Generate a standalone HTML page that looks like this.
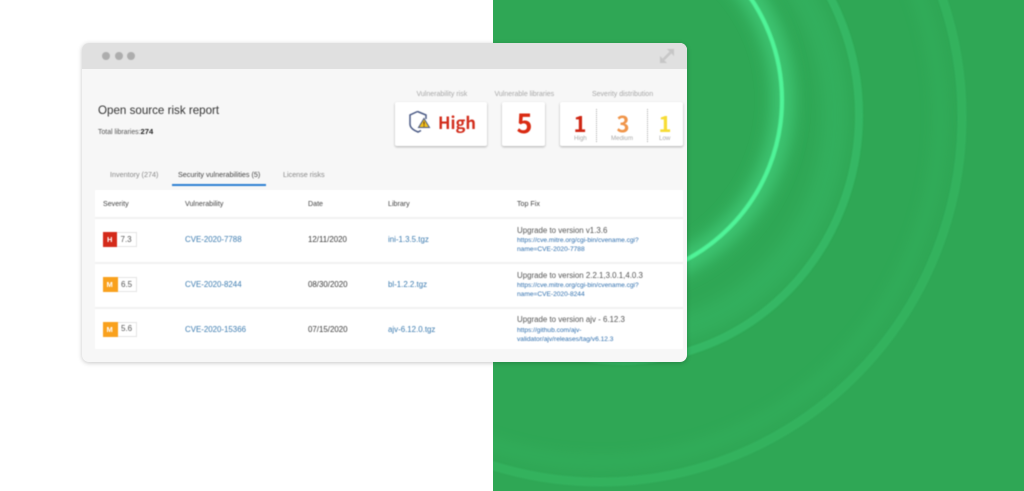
<!DOCTYPE html>
<html><head><meta charset="utf-8"><style>
html,body{margin:0;padding:0;background:#fff}
#p{position:relative;width:1024px;height:491px;overflow:hidden;background:#fff;font-family:"Liberation Sans",sans-serif}
#g{position:absolute;left:493px;top:0;width:531px;height:491px;background:#2fa755;overflow:hidden}
#card{position:absolute;left:82px;top:43px;width:605px;height:319px;background:#f7f7f7;border-radius:7px;box-shadow:0 1px 5px rgba(0,0,0,.22)}
#hd{position:absolute;left:82px;top:43px;width:605px;height:26px;background:#e0e0e0;border-radius:7px 7px 0 0}
.abs{position:absolute}
.t{position:absolute;white-space:nowrap;line-height:1}
.box{position:absolute;background:#fff;border-radius:2px;box-shadow:0 1px 2px rgba(0,0,0,.3)}
.dot{position:absolute;top:52px;width:8px;height:8px;border-radius:50%;background:#adadad}
.lab{color:#a8a8a8;font-size:7px}
.link{color:#3d7cb0;font-size:7.9px}
.date{color:#3a3a3a;font-size:7.9px}
.sm{color:#2f6fae;font-size:6.6px}
.fix{color:#555;font-size:7.9px}
.th{color:#444;font-size:7.1px}
.big{font-family:"Noto Sans CJK SC","Liberation Sans",sans-serif;font-weight:700}
.sep{position:absolute;left:95px;width:588px;height:2px;background:#f1f1f1}
#ui{position:absolute;left:0;top:0;width:1024px;height:491px;filter:blur(.45px)}
</style></head><body><div id="p">
<div id="g"><svg width="531" height="491" viewBox="493 0 531 491" style="position:absolute;left:0;top:0">
<defs><filter id="b1" x="-30%" y="-30%" width="160%" height="160%"><feGaussianBlur stdDeviation="8"/></filter><filter id="b2" x="-10%" y="-10%" width="120%" height="120%"><feGaussianBlur stdDeviation=".8"/></filter><filter id="b3" x="-30%" y="-30%" width="160%" height="160%"><feGaussianBlur stdDeviation="6"/></filter></defs>
<ellipse cx="623" cy="115" rx="212" ry="222" fill="none" stroke="#3ac06e" stroke-width="26" opacity=".35" filter="url(#b1)"/>
<circle cx="601" cy="100" r="182" fill="none" stroke="#48dc88" stroke-width="22" opacity=".6" filter="url(#b1)"/>
<circle cx="601" cy="100" r="181" fill="none" stroke="#50f498" stroke-width="4.2" filter="url(#b2)"/>
<ellipse cx="623" cy="115" rx="236" ry="246" fill="none" stroke="#37bd69" stroke-width="8" opacity=".75" filter="url(#b2)"/>
<ellipse cx="600" cy="117" rx="340" ry="345" fill="none" stroke="#35b662" stroke-width="14" opacity=".35" filter="url(#b3)"/>
<ellipse cx="600" cy="117" rx="362" ry="365" fill="none" stroke="#36b561" stroke-width="9" opacity=".8" filter="url(#b2)"/>
</svg></div>
<div id="card"></div>
<div id="hd"></div>
<div id="ui">
<div class="dot" style="left:102px"></div><div class="dot" style="left:115px"></div><div class="dot" style="left:127px"></div>
<svg class="abs" style="left:659px;top:48px" width="16" height="16" viewBox="0 0 16 16"><path d="M4.5 11.5 L11.5 4.5" fill="none" stroke="#c6c6c6" stroke-width="2.6"/><path d="M8 1 H15 V8 Z M1 8 V15 H8 Z" fill="#c6c6c6"/></svg>

<div class="t" style="left:98px;top:105px;font-size:11.6px;color:#333">Open source risk report</div>
<div class="t" style="left:98px;top:127.5px;font-size:6.9px;color:#555">Total libraries:<b style="font-size:7.6px;color:#222">274</b></div>

<div class="t lab" style="left:416.5px;top:90.5px">Vulnerability risk</div>
<div class="t lab" style="left:494.5px;top:90.5px">Vulnerable libraries</div>
<div class="t lab" style="left:592px;top:90.5px">Severity distribution</div>

<div class="box" style="left:395px;top:102px;width:92px;height:44px"></div>
<svg class="abs" style="left:408px;top:110px" width="24" height="24" viewBox="0 0 24 24"><path d="M9.5 1.5 L18 5 V9 M9.5 1.5 L2 5 V14 C2 18 6 20.5 10 22 L13 20.5" fill="none" stroke="#4a5a85" stroke-width="1.5"/><path d="M16 8.5 L21.5 17.5 H10.5 Z" fill="#f2c21c" stroke="#4a5a85" stroke-width="1"/><rect x="15.4" y="11.5" width="1.2" height="3.3" fill="#7a4a10"/><rect x="15.4" y="15.4" width="1.2" height="1.2" fill="#7a4a10"/></svg>
<div class="t big" style="left:438px;top:114px;font-size:16.5px;color:#d22d1c">High</div>

<div class="box" style="left:502px;top:102px;width:43px;height:44px"></div>
<div class="t big" style="left:516.5px;top:108px;font-size:27px;color:#d92a12">5</div>

<div class="box" style="left:560px;top:102px;width:123px;height:44px"></div>
<div class="abs" style="left:596px;top:109px;height:33px;border-left:1px dotted #aaa"></div>
<div class="abs" style="left:647px;top:109px;height:33px;border-left:1px dotted #aaa"></div>
<div class="t big" style="left:573.5px;top:111.5px;font-size:22px;color:#cf2613">1</div>
<div class="t big" style="left:616.5px;top:111.5px;font-size:22px;color:#f0954a">3</div>
<div class="t big" style="left:658.5px;top:111.5px;font-size:22px;color:#f7dc35">1</div>
<div class="t" style="left:574px;top:135.5px;font-size:6.2px;color:#aaa">High</div>
<div class="t" style="left:611px;top:135.5px;font-size:6.2px;color:#aaa">Medium</div>
<div class="t" style="left:659px;top:135.5px;font-size:6.2px;color:#aaa">Low</div>

<div class="t" style="left:110px;top:170.5px;font-size:7.2px;color:#888">Inventory (274)</div>
<div class="t" style="left:178px;top:170.5px;font-size:7.2px;color:#444">Security vulnerabilities (5)</div>
<div class="t" style="left:283px;top:170.5px;font-size:7.2px;color:#888">License risks</div>
<div class="abs" style="left:172px;top:184px;width:94px;height:2px;background:#2b7fd3"></div>

<div class="abs" style="left:95px;top:190px;width:588px;height:159px;background:#fff"></div>
<div class="sep" style="top:217px"></div><div class="sep" style="top:262px"></div><div class="sep" style="top:307px"></div>

<div class="t th" style="left:103px;top:200.5px">Severity</div>
<div class="t th" style="left:185px;top:200.5px">Vulnerability</div>
<div class="t th" style="left:308px;top:200.5px">Date</div>
<div class="t th" style="left:388px;top:200.5px">Library</div>
<div class="t th" style="left:517px;top:200.5px">Top Fix</div>

<div class="abs" style="left:103px;top:232px;width:34px;height:15px;box-sizing:border-box;border:1px solid #e4e4e4;background:#fff"></div>
<div class="abs" style="left:103px;top:232px;width:14px;height:15px;background:#d42a1a"></div>
<div class="t" style="left:107px;top:236px;font-size:7.5px;color:#fff;font-weight:700">H</div>
<div class="t" style="left:120.5px;top:235.5px;font-size:8px;color:#555">7.3</div>

<div class="abs" style="left:103px;top:277px;width:34px;height:15px;box-sizing:border-box;border:1px solid #e4e4e4;background:#fff"></div>
<div class="abs" style="left:103px;top:277px;width:15px;height:15px;background:#f9a11d"></div>
<div class="t" style="left:106.5px;top:281px;font-size:7.5px;color:#fff;font-weight:700">M</div>
<div class="t" style="left:121px;top:280.5px;font-size:8px;color:#555">6.5</div>

<div class="abs" style="left:103px;top:322px;width:34px;height:15px;box-sizing:border-box;border:1px solid #e4e4e4;background:#fff"></div>
<div class="abs" style="left:103px;top:322px;width:15px;height:15px;background:#f9a11d"></div>
<div class="t" style="left:106.5px;top:326px;font-size:7.5px;color:#fff;font-weight:700">M</div>
<div class="t" style="left:121px;top:325px;font-size:8px;color:#555">5.6</div>

<div class="t link" style="left:185px;top:236px">CVE-2020-7788</div>
<div class="t link" style="left:185px;top:280.5px">CVE-2020-8244</div>
<div class="t link" style="left:185px;top:325.5px">CVE-2020-15366</div>

<div class="t date" style="left:308px;top:236px">12/11/2020</div>
<div class="t date" style="left:308px;top:280.5px">08/30/2020</div>
<div class="t date" style="left:308px;top:325.5px">07/15/2020</div>

<div class="t link" style="left:388px;top:236px">ini-1.3.5.tgz</div>
<div class="t link" style="left:388px;top:280.5px">bl-1.2.2.tgz</div>
<div class="t link" style="left:388px;top:325.5px">ajv-6.12.0.tgz</div>

<div class="t fix" style="left:517px;top:226.5px">Upgrade to version v1.3.6</div>
<div class="t sm" style="left:517px;top:238px">https://cve.mitre.org/cgi-bin/cvename.cgi?</div>
<div class="t sm" style="left:517px;top:247px">name=CVE-2020-7788</div>

<div class="t fix" style="left:517px;top:271.5px">Upgrade to version 2.2.1,3.0.1,4.0.3</div>
<div class="t sm" style="left:517px;top:282.5px">https://cve.mitre.org/cgi-bin/cvename.cgi?</div>
<div class="t sm" style="left:517px;top:291.5px">name=CVE-2020-8244</div>

<div class="t fix" style="left:517px;top:316px">Upgrade to version ajv - 6.12.3</div>
<div class="t sm" style="left:517px;top:327.5px">https://github.com/ajv-</div>
<div class="t sm" style="left:517px;top:336.5px">validator/ajv/releases/tag/v6.12.3</div>
</div>
</div></body></html>
